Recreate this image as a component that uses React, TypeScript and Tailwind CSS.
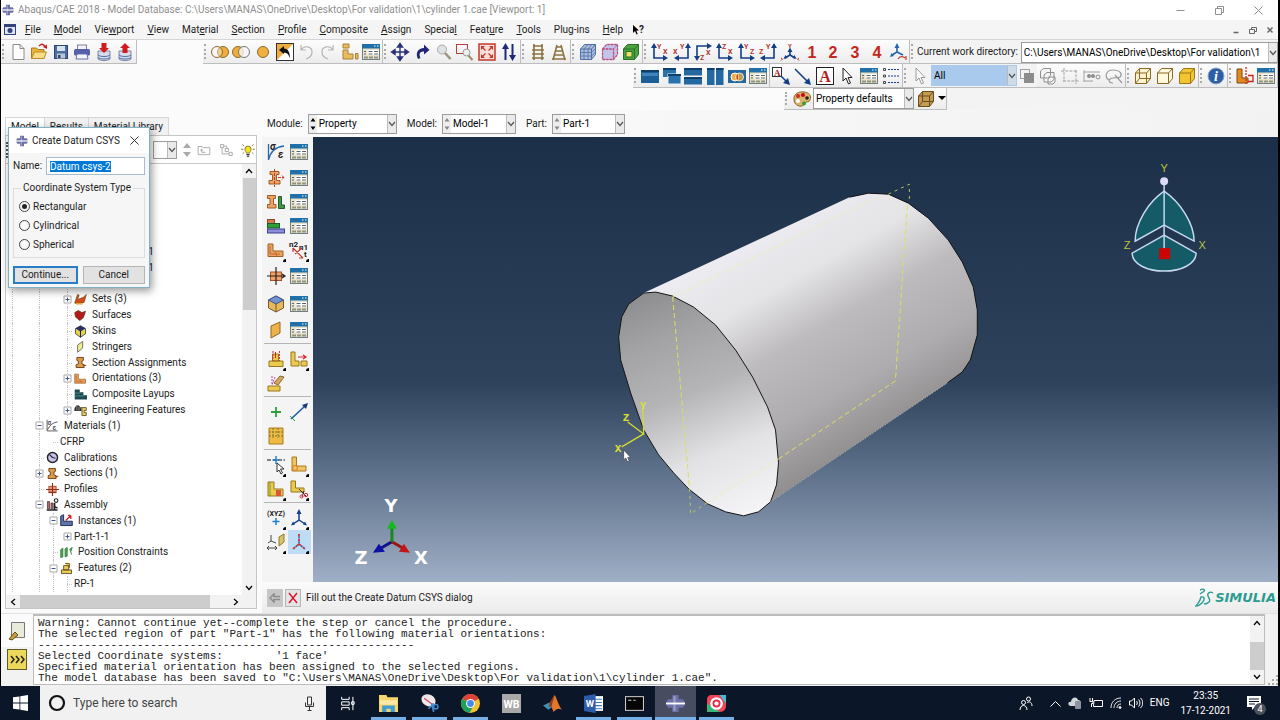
import { useEffect, useRef, useState } from 'react';
import type { ReactNode } from 'react';

function Svg({ children, size = 18 }: { children: ReactNode; size?: number }) {
  return (
    <svg width={size} height={size} viewBox="0 0 18 18" fill="none" className="shrink-0 overflow-visible">
      {children}
    </svg>
  );
}

// Small table window, used for every "manager" button
const manager = (
  <>
    <rect x="0.5" y="1.5" width="17" height="15" fill="#e9e2c8" stroke="#6f7f7f" />
    <rect x="0" y="1" width="18" height="4.5" rx="1" fill="#1f6fa8" />
    <path d="M12 3h1.5M15 3h1.5" stroke="#fff" />
    <rect x="5.5" y="7" width="11" height="5" fill="#fff" />
    <path d="M6.5 8.5h4M12 8.5h4M6.5 11h4M12 11h4M2 8.5h2M2 11h2" stroke="#5b6468" />
    <rect x="2" y="13.5" width="4" height="2" fill="#8d9483" />
    <rect x="7" y="13.5" width="4" height="2" fill="#8d9483" />
    <rect x="12" y="13.5" width="4" height="2" fill="#8d9483" />
  </>
);

const abaqusLogo = (
  <>
    <path d="M6 1h6v4h4l1.5 2v4L16 13h-4v4H6v-4H2L.5 11V7L2 5h4z" fill="#6c70a6" />
    <path d="M7 2h2v14H7z" fill="#9a9dc6" />
    <path d="M0 9h18" stroke="#fff" strokeWidth="1.8" />
  </>
);

const blueArrow = '#123f86';

function axes(flip: boolean, a: string, b: string) {
  return (
    <>
      {flip ? (
        <>
          <path d="M15 4v11H5" stroke={blueArrow} strokeWidth="1.6" />
          <path d="M15 0l-3 5h6zM1 15l5-3v6z" fill={blueArrow} />
        </>
      ) : (
        <>
          <path d="M3 4v11h10" stroke={blueArrow} strokeWidth="1.6" />
          <path d="M3 0L0 5h6zM17 15l-5-3v6z" fill={blueArrow} />
        </>
      )}
      <text x={flip ? 7 : 6} y="6" fontSize="7" fontWeight="700" fill="#b5342c">{a}</text>
      <text x={flip ? 0 : 12} y="11" fontSize="7" fontWeight="700" fill="#b5342c">{b}</text>
    </>
  );
}

const digit = (n: string) => (
  <text x="9" y="15" textAnchor="middle" fontSize="16" fontWeight="700" fill="#c4261d" fontFamily="Liberation Sans">{n}</text>
);

const cube = (fill: string, stroke: string) => (
  <>
    <path d="M1.5 6l4-4.5h11v10l-4 5h-11z" fill={fill} stroke={stroke} />
    <path d="M1.5 6h11v10.500M12.5 6l4-4.5" stroke={stroke} />
  </>
);

const icons: Record<string, ReactNode> = {
  manager,
  newFile: <path d="M4 1.5h7l4 4v11H4zM11 1.5v4h4" fill="#fff" stroke="#8b8b8b" />,
  open: (
    <>
      <path d="M1.5 15.5V5h5L8 6.500h6v9z" fill="#e8b43c" stroke="#a87a1d" />
      <path d="M1.500 15.500L4.500 9h12L14 15.500z" fill="#f9dc83" stroke="#b98b2b" />
      <path d="M9 3c3-3 5-1.500 6 1" stroke="#c8241c" strokeWidth="1.500" />
      <path d="M17 1.500V6l-4-2z" fill="#c8241c" />
    </>
  ),
  save: (
    <>
      <rect x="2.5" y="2.5" width="13" height="13" fill="#4a6ea3" stroke="#2e466f" />
      <rect x="5" y="3" width="8" height="5" fill="#d9e3ef" />
      <rect x="5" y="10.5" width="8" height="5" fill="#b9c4d4" />
      <rect x="6" y="12" width="2.5" height="3" fill="#2e466f" />
    </>
  ),
  print: (
    <>
      <rect x="4.5" y="2" width="9" height="5" fill="#f2f2f7" stroke="#7d80a0" />
      <rect x="1" y="6" width="16" height="6.5" rx="1.5" fill="#5560a8" />
      <path d="M4 11h10l1 5H3z" fill="#f4f4fb" stroke="#6a70a6" />
    </>
  ),
  dbIn: (
    <>
      <path d="M3 8v8c2 2 10 2 12 0V8z" fill="#d6dcea" stroke="#7a88ab" />
      <path d="M3 12c2 2 10 2 12 0M3 14.5c2 2 10 2 12 0" stroke="#5470a5" />
      <path d="M6.5 0h5v5H14l-5 5-5-5h2.5z" fill="#d01b1b" />
    </>
  ),
  dbOut: (
    <>
      <path d="M3 8v8c2 2 10 2 12 0V8z" fill="#d6dcea" stroke="#7a88ab" />
      <path d="M3 12c2 2 10 2 12 0M3 14.5c2 2 10 2 12 0" stroke="#5470a5" />
      <path d="M6.5 10h5V5H14L9 0 4 5h2.5z" fill="#d01b1b" />
    </>
  ),
  union: (
    <>
      <circle cx="12" cy="9" r="5.5" fill="#efae3c" stroke="#8a6a2c" />
      <circle cx="6" cy="9" r="5.5" fill="#fff" fillOpacity="0.4" stroke="#8a6a2c" />
    </>
  ),
  subtract: (
    <>
      <circle cx="6" cy="9" r="5.5" fill="#efae3c" stroke="#8a6a2c" />
      <circle cx="12" cy="9" r="5.5" fill="#f6f6f6" fillOpacity="0.8" stroke="#777" />
    </>
  ),
  circle: <circle cx="9" cy="9" r="5.5" fill="#f0b040" stroke="#8a6a2c" />,
  replace: (
    <>
      <rect x="0.5" y="0.5" width="17" height="17" fill="#fff" stroke="#333" />
      <path d="M1 1h16L1 17z" fill="#efae3c" />
      <path d="M3 7l5-4v2.5c4 0 6 4 6 10-1-4-3-6-6-6V11z" fill="#111" />
    </>
  ),
  undo: <path d="M4 2v5h5M4 7c3-5 11-4 11 2 0 4-3 6-6 7" stroke="#b5b5b5" strokeWidth="1.2" />,
  redo: <path d="M14 2v5H9M14 7C11 2 3 3 3 9c0 4 3 6 6 7" stroke="#b5b5b5" strokeWidth="1.2" />,
  partL: (
    <>
      <path d="M2 1h6v4H2zM2 7h5v4h5v5H2z" fill="#e9bd5c" stroke="#a78138" />
      <path d="M14.500 10.500H17V16h-2.500z" fill="#e9bd5c" stroke="#a78138" />
    </>
  ),
  pan: <path d="M9 2v14M2 9h14M9 .5L6.500 4h5zM9 17.500L6.500 14h5zM.5 9L4 6.500v5zM17.500 9L14 6.500v5z" stroke="#2b3079" strokeWidth="1.4" fill="#2b3079" />,
  rotate: <path d="M5 16C2 10 5 5 11 5V1.500L16.500 7 11 11.500v-3c-4-.5-5.500 2.500-3.500 6.500z" fill="#21267a" />,
  zoomIn: (
    <>
      <path d="M9.500 9.500l6 6.500" stroke="#9c9279" strokeWidth="2.5" />
      <circle cx="7" cy="6.5" r="4.5" fill="#dfe2e4" stroke="#a9a9a9" />
    </>
  ),
  zoomBox: (
    <>
      <rect x="0.5" y="1.5" width="11" height="9" stroke="#b5423a" />
      <path d="M12 12l4.500 5" stroke="#9c8a69" strokeWidth="2" />
      <circle cx="10.5" cy="9.5" r="3.5" fill="#eceff0" stroke="#999" />
    </>
  ),
  fit: (
    <>
      <rect x="1" y="1" width="16" height="16" fill="#f7ded9" stroke="#c5382c" strokeWidth="1.5" />
      <path d="M3 3h4L3 7zM15 3v4l-4-4zM3 15v-4l4 4zM15 15h-4l4-4z" fill="#c5382c" />
      <path d="M4 4l3.500 3.500M14 4l-3.500 3.500M4 14l3.500-3.500M14 14l-3.500-3.500" stroke="#c5382c" strokeWidth="1.3" />
    </>
  ),
  cycle: (
    <>
      <path d="M5.500 4v13M12.500 1v13" stroke="#1f2a78" strokeWidth="2" />
      <path d="M5.500 0L2 6h7zM12.500 18L9 12h7z" fill="#1f2a78" />
    </>
  ),
  perspOff: <path d="M5 1v16M13 1v16M4 3h10M3 7h12M3 11h12M3 15h12" stroke="#8a7440" strokeWidth="1.6" />,
  perspOn: <path d="M7 2L3 17M11 2l4 15M6 4h6M5.500 8h7M4 12h10M2 16h14" stroke="#8a7440" strokeWidth="1.6" />,
  cubeBlue: (
    <>
      {cube('#a9bddd', '#536ea3')}
      <path d="M5 6v10.500M9 6v10.500M1.500 9.500h11l4-4M1.500 13h11l4-4M5 6l4-4.500M9 6l4-4.500" stroke="#536ea3" strokeWidth="0.8" />
    </>
  ),
  cubePink: (
    <>
      {cube('#c3c4ea', '#9a86c4')}
      <path d="M1.500 6l4-4.500h11v10l-4 5h-11zM1.500 6h11v10.500" stroke="#d0486c" strokeDasharray="2 1.5" strokeWidth="1.3" />
    </>
  ),
  cubeGreen: (
    <>
      {cube('#4aa540', '#2c6d28')}
      <rect x="4" y="8.5" width="6" height="5.5" fill="#f0df6a" stroke="#2c6d28" />
    </>
  ),
  xy: axes(false, 'Y', 'X'),
  xyB: axes(true, 'Y', 'X'),
  xz: (
    <>
      <path d="M3 14V3h11" stroke={blueArrow} strokeWidth="1.6" />
      <path d="M3 18l-3-5h6zM18 3l-5-3v6z" fill={blueArrow} />
      <text x="12" y="12" fontSize="7" fontWeight="700" fill="#b5342c">X</text>
      <text x="6" y="17" fontSize="7" fontWeight="700" fill="#b5342c">Z</text>
    </>
  ),
  zx: axes(false, 'Z', 'X'),
  yz: axes(false, 'Y', 'Z'),
  zy: axes(true, 'Y', 'Z'),
  iso: (
    <>
      <path d="M9 7v5l-5 3M9 12l5 3" stroke={blueArrow} strokeWidth="1.6" />
      <path d="M9 4.500L6.500 9h5zM2.500 16l2-4 2 3zM15.500 16l-2-4-2 3z" fill={blueArrow} />
      <text x="7" y="5" fontSize="6" fontWeight="700" fill="#b5342c">Y</text>
      <path d="M0 15l1.500 1L0 17.500M18 15l-1.500 1 1.500 1.500" stroke="#b5342c" />
    </>
  ),
  d1: digit('1'),
  d2: digit('2'),
  d3: digit('3'),
  d4: digit('4'),
  saveView: (
    <>
      <path d="M8 4v5l-5 3M8 9l6 3" stroke="#2862b0" strokeWidth="1.6" />
      <path d="M8 0L5.500 5h5zM1 14l1.500-4 2.500 3z" fill="#2862b0" />
      <path d="M9 16c2-3 5-3 7-1M17 17v-4" stroke="#c9362c" strokeWidth="1.2" />
    </>
  ),
  vpSingle: (
    <>
      <rect x="0" y="3" width="18" height="13" fill="#1c5e97" />
      <rect x="0" y="3" width="18" height="2" fill="#0f3f6c" />
      <rect x="1" y="6" width="16" height="3" fill="#3f85ba" />
    </>
  ),
  vpCascade: (
    <>
      <rect x="0" y="1" width="13" height="9" fill="#2b72ab" />
      <rect x="0" y="1" width="13" height="2" fill="#0f3f6c" />
      <rect x="5" y="7" width="13" height="10" fill="#2b72ab" stroke="#e8eef5" />
      <rect x="5" y="7" width="13" height="2" fill="#0f3f6c" />
    </>
  ),
  vpRows: (
    <>
      <rect x="0" y="1" width="18" height="7.5" fill="#2368a1" />
      <rect x="0" y="1" width="18" height="2" fill="#0f3f6c" />
      <rect x="0" y="10" width="18" height="7.5" fill="#2368a1" />
      <rect x="0" y="10" width="18" height="2" fill="#0f3f6c" />
    </>
  ),
  vpCols: (
    <>
      <rect x="1" y="1" width="7.5" height="17" fill="#2368a1" />
      <rect x="1" y="1" width="7.5" height="2" fill="#0f3f6c" />
      <rect x="10" y="1" width="7.5" height="17" fill="#2368a1" />
      <rect x="10" y="1" width="7.5" height="2" fill="#0f3f6c" />
    </>
  ),
  vpLink: (
    <>
      <rect x="0" y="3" width="18" height="13" fill="#2368a1" />
      <circle cx="7" cy="10" r="4" fill="#f0b040" stroke="#fff" />
      <circle cx="11.5" cy="10" r="4" fill="#f0b040" fillOpacity="0.7" stroke="#fbe7bb" />
      <path d="M9.300 7.500v5" stroke="#c33" strokeWidth="1.3" />
    </>
  ),
  textArrow: (
    <>
      <rect x="0.5" y="0.5" width="9" height="9" fill="#fff" stroke="#333" />
      <text x="2" y="8.5" fontSize="9" fontWeight="700" fill="#b3201a" fontFamily="Liberation Serif">A</text>
      <path d="M9 9l6 6" stroke={blueArrow} strokeWidth="1.5" />
      <path d="M18 18l-7-2 5-5z" fill={blueArrow} />
    </>
  ),
  arrow: (
    <>
      <path d="M1 2l12 12" stroke={blueArrow} strokeWidth="1.6" />
      <path d="M17 18l-7-2 5-5z" fill={blueArrow} />
    </>
  ),
  textA: (
    <>
      <rect x="0.5" y="0.5" width="17" height="17" fill="#fff" stroke="#222" />
      <text x="9" y="14.5" textAnchor="middle" fontSize="16" fontWeight="700" fill="#b3201a" fontFamily="Liberation Serif">A</text>
    </>
  ),
  pointer: <path d="M5 1v13l3-3 2.500 6 2-1L10 10.500h4z" fill="#fff" stroke="#222" />,
  pointerDim: <path d="M5 1v13l3-3 2.500 6 2-1L10 10.500h4z" fill="#fff" stroke="#999" />,
  list: (
    <>
      <path d="M1.500 1.500h2v2h-2zM1.500 8h2v2h-2zM1.500 14.500h2v2h-2z" stroke="#444" />
      <path d="M6 2.500h12M6 9h12M6 15.500h12" stroke={blueArrow} strokeDasharray="2 1" />
    </>
  ),
  selBox: (
    <>
      <rect x="2.5" y="2.5" width="9" height="9" stroke="#a0a0a0" />
      <rect x="6" y="6" width="10" height="10" fill="#8c8c8c" />
    </>
  ),
  selCubes: <path d="M1.500 4l3-2.500h7v7l-3 2.500h-7zM5 8l3-2.500h7v7L12 15H5zM9 12l2-2h5v5l-2 2H9z" stroke="#8f8f8f" fill="#f4f4f4" />,
  selDrag: <path d="M3 1v14M15 3v14M0 4h16M2 14h16" stroke="#a0a0a0" strokeDasharray="3 1.2" />,
  selFilter: (
    <>
      <path d="M1 3v12M1 5h16M1 14h9" stroke="#a0a0a0" />
      <circle cx="6" cy="9" r="2" fill="#8c8c8c" />
      <circle cx="10" cy="9" r="2" fill="#8c8c8c" />
      <circle cx="15" cy="10" r="2" stroke="#8c8c8c" />
    </>
  ),
  selLasso: <path d="M4 13C-1 10 1 3 8 3s10 4 7 7c-3 2-8-1-11 3 0 2 2 3 4 3M10 8l7 8" stroke="#9a9a9a" strokeWidth="1.2" />,
  wire: (
    <>
      {cube('#fff4cf', '#8a6a20')}
      <path d="M5.500 1.500v10h11M5.500 11.500l-4 5" stroke="#8a6a20" />
    </>
  ),
  hidden: cube('#fff9df', '#8a6a20'),
  shaded: cube('#f2c531', '#9a7818'),
  info: (
    <>
      <circle cx="9" cy="9" r="8" fill="#2c5ea8" stroke="#8fa8cc" />
      <text x="9" y="14" textAnchor="middle" fontSize="14" fontStyle="italic" fontWeight="700" fill="#fff" fontFamily="Liberation Serif">i</text>
    </>
  ),
  cutL: (
    <>
      <path d="M1 2h5v9h6v5H1z" fill="#e08a1e" stroke="#7d4a10" />
      <path d="M10 0v18" stroke="#d22" strokeDasharray="2 1" strokeWidth="1.3" />
      <path d="M12 8.500h5v6h-5" stroke="#c22" strokeWidth="1.3" />
    </>
  ),
  palette: (
    <>
      <path d="M1 10C0 4 6 1 11 2c5 0 8 4 6 8-1 3-4 1-5 3s-3 4-6 3-5-3-5-6z" fill="#d9b36a" stroke="#8c6a33" />
      <circle cx="5" cy="6" r="2" fill="#d22a22" />
      <circle cx="10" cy="5" r="2" fill="#c02" />
      <circle cx="14" cy="8" r="1.8" fill="#222" />
      <circle cx="5" cy="11" r="2" fill="#fff" />
      <circle cx="11" cy="13.5" r="2" fill="#3a9c3a" />
    </>
  ),
  cubeTan: (
    <>
      {cube('#c59a53', '#6b4d1c')}
      <path d="M5.500 1.500v10h11M5.500 11.500l-4 5" stroke="#6b4d1c" />
    </>
  ),
  material: (
    <>
      <path d="M1.500 1v16M1.500 17C3 10 8 4 17 3" stroke="#2d69a8" strokeWidth="1.3" />
      <text x="3" y="7" fontSize="10" fontWeight="700" fontStyle="italic" fill="#222">σ</text>
      <text x="11" y="15" fontSize="10" fontWeight="700" fontStyle="italic" fill="#222">ε</text>
    </>
  ),
  section: (
    <>
      <path d="M3 2.500h9v3H9.500v6H13V15H2v-3.500h3.500v-6H3z" fill="#eda465" stroke="#9c5a26" />
      <path d="M7.500 0v18M11 8.500h6M15 6.500l2 2-2 2" stroke="#c03a22" strokeDasharray="3 1" />
    </>
  ),
  assignSection: (
    <>
      <path d="M.5 2.500h8v3h-2v6H9V15H.5v-3.500H3v-6H.5z" fill="#eda465" stroke="#9c5a26" />
      <path d="M11.500 3.500h3V12h3v3.500h-6z" fill="#3f9648" stroke="#235a2a" />
    </>
  ),
  layup: (
    <>
      <rect x="0.5" y="2.5" width="7" height="4" fill="#d77b4d" stroke="#8a4d2c" />
      <rect x="0.5" y="6.5" width="12" height="4.5" fill="#2f9d3c" stroke="#1c5e24" />
      <rect x="0.5" y="12" width="17" height="4" fill="#8a8fdc" stroke="#3b4090" />
    </>
  ),
  orient: (
    <>
      <path d="M1 3h5v7h10v5.500H1z" fill="#e9a35b" stroke="#9a622a" />
      <path d="M3 5v8h10M8 11l2 4" stroke="#c2562a" strokeWidth="0.8" />
    </>
  ),
  normals: (
    <>
      <text x="-1" y="6" fontSize="8" fontWeight="700" fill="#222">n2</text>
      <text x="9" y="9" fontSize="8" fontWeight="700" fill="#222">n1</text>
      <path d="M3 7l10 10M5 13l7-6M3 7v4M13 17H9" stroke="#c43a30" strokeWidth="1.2" />
      <text x="14" y="16" fontSize="8" fontWeight="700" fill="#222">t</text>
    </>
  ),
  profile: (
    <>
      <rect x="3.5" y="5" width="11" height="8.5" fill="#eea26c" stroke="#a5522c" />
      <path d="M9 0v18M0 9h18M15 7l3 2-3 2" stroke="#2a2018" strokeWidth="1.2" />
    </>
  ),
  skin: (
    <>
      <path d="M9 1l7.500 4v8L9 17l-7.500-4V5z" fill="#e9b85a" stroke="#6f5a2c" />
      <path d="M9 1l7.500 4L9 9 1.500 5z" fill="#7492d2" stroke="#3c558f" />
      <path d="M9 9v8" stroke="#6f5a2c" />
    </>
  ),
  stringer: <path d="M4 5l9-4v11l-9 5z" fill="#eeb24a" stroke="#8f6a26" />,
  extrude: (
    <>
      <path d="M2 11h14v5.500H2zM5.500 4h6v7h-6z" fill="#ecca4d" stroke="#96761f" />
      <path d="M6 1v10M12.500 1v10" stroke="#c33" strokeDasharray="2 1" />
      <path d="M8.500 2v6" stroke="#b33" />
    </>
  ),
  extend: (
    <>
      <path d="M1 2h4v9h4v5H1zM11 11h6v5h-6z" fill="#ecca4d" stroke="#96761f" />
      <path d="M8 7h7M13 5l3 2-3 2" stroke="#d22" strokeWidth="1.2" />
    </>
  ),
  edit: (
    <>
      <path d="M1 12h12v5H1z" fill="#ecca4d" stroke="#96761f" />
      <path d="M7 9l6-7 4 1-6 8z" fill="#d5a85f" stroke="#8a6730" />
      <path d="M5 2v9M8 3l-3 8" stroke="#b349a8" strokeDasharray="2 1" />
    </>
  ),
  plus: <path d="M9 4v10M4 9h10" stroke="#2fa03a" strokeWidth="1.8" />,
  datumAxis: (
    <>
      <path d="M1 16L15 3" stroke="#1d5ea0" strokeWidth="1.6" />
      <path d="M18 0l-2 6-4-4z" fill="#163a78" />
      <path d="M0 13l5 5" stroke="#2fa03a" />
    </>
  ),
  grid: (
    <>
      <path d="M2 1h14v16H2z" fill="#efb944" stroke="#a87c20" />
      <path d="M2 5h14M2 9h14M6 1v10M11 1v10" stroke="#7d7a2a" strokeDasharray="2 1" />
    </>
  ),
  partition: (
    <>
      <path d="M0 4h18" stroke="#111" strokeDasharray="4 1.5" />
      <path d="M9 0v8M6 4h6" stroke="#1d7fd0" strokeWidth="1.4" />
      <path d="M10 7v9l2-2 2 4 1.500-1-2-4H17z" fill="#fff" stroke="#333" />
    </>
  ),
  bracket: (
    <>
      <path d="M2 1h4.500v9H16v5H2z" fill="#f0c464" stroke="#a87c20" />
      <circle cx="5" cy="12" r="2.5" stroke="#e07a20" />
    </>
  ),
  cells: (
    <>
      <path d="M1 2h6v7h9v7H1z" fill="#ecca4d" stroke="#96761f" />
      <rect x="9" y="10" width="5" height="6" fill="#d8563a" />
      <path d="M3 2v14" stroke="#7a9a30" />
    </>
  ),
  cutPart: (
    <>
      <path d="M1 1h4.500v7H14v4H1z" fill="#ecca4d" stroke="#96761f" />
      <path d="M9 9l7 7M12 17l2-6" stroke="#333" />
      <circle cx="16" cy="15" r="1.7" stroke="#d23" />
      <circle cx="11.5" cy="16.5" r="1.5" stroke="#d23" />
    </>
  ),
  xyz: (
    <>
      <text x="9" y="7" textAnchor="middle" fontSize="7" fontWeight="700" fill="#222">(XYZ)</text>
      <path d="M9 9v7M5.500 12.500h7" stroke="#1d7fd0" strokeWidth="1.5" />
    </>
  ),
  csys: (
    <>
      <path d="M9 4v7l-6 4M9 11l6 4" stroke={blueArrow} strokeWidth="1.5" />
      <path d="M9 0L6.500 5h5zM1 16.500l2-4 2 3zM17 16.500l-2-4-2 3z" fill={blueArrow} />
    </>
  ),
  planeOffset: (
    <>
      <path d="M4 2v6L1 10M4 8l5 2" stroke="#444" />
      <path d="M12 4l5-3v8l-5 4z" fill="#d6c46a" stroke="#8a7a2a" />
      <path d="M0 15h10M2 13l-2 2 2 2M8 13l2 2-2 2" stroke="#444" />
    </>
  ),
  csysDashed: (
    <>
      <path d="M9 1v10l-6 5M9 11l6 5" stroke="#c33" strokeDasharray="2.5 2.5" strokeWidth="1.8" />
      <path d="M9 1v10l-6 5M9 11l6 5" stroke="#1d5ea0" strokeDasharray="2 3" strokeDashoffset="2.5" strokeWidth="1.4" />
    </>
  ),
  // tree icons
  sets: (
    <>
      <path d="M1 14L5 2l2 1-2 6 8-3 4-4-3 11-9 2z" fill="#d84a1c" stroke="#6e4b12" />
      <path d="M3 15h9" stroke="#e3b13a" strokeWidth="2" />
    </>
  ),
  surfaces: <path d="M1 5l5-3 5 3 5-2-3 9-5 4-6-5z" fill="#b51a1a" stroke="#5e3a1a" />,
  skins: (
    <>
      <path d="M9 1l7 4v7l-7 5-7-5V5z" fill="#e6d44e" stroke="#222" />
      <path d="M9 1l7 4-7 4-7-4z" fill="#2a2f6a" />
      <path d="M9 8v9" stroke="#222" strokeWidth="1.5" />
    </>
  ),
  stringers: <path d="M5 7l7-5v9l-7 6z" fill="#f0ec90" stroke="#444" />,
  beam: <path d="M4 2h9v4l-2 1v4l3 1v4H3v-4l3-1V7L4 6zM13 13h4" fill="#d99a4c" stroke="#6e3d12" strokeWidth="1.3" />,
  composite: (
    <>
      <path d="M1 2h7v4h5v4h5v6H1z" fill="#1e4a52" />
      <path d="M1 7h8M1 11h13" stroke="#4fa39c" />
    </>
  ),
  features: (
    <>
      <path d="M1 9c0-9 8-9 9 0z" fill="#333" stroke="#111" />
      <path d="M4 3v6M7 3v6" stroke="#aaa" />
      <path d="M10 5h7M11 5v11h6v-4h-3V9h3V5" fill="#e8d070" stroke="#5a4a1a" strokeWidth="1.2" />
    </>
  ),
  treeMaterial: (
    <>
      <path d="M1.500 1v15.500H16M2 15C5 9 9 5 16 4" stroke="#555" strokeWidth="1.3" />
      <text x="2" y="8" fontSize="9" fontWeight="700" fill="#555">σ</text>
      <text x="9" y="15" fontSize="9" fontWeight="700" fill="#555">ε</text>
    </>
  ),
  calib: (
    <>
      <circle cx="9" cy="9" r="7" fill="#c9c4ee" stroke="#222" strokeWidth="2" />
      <path d="M9 9L5 5M9 9l4 1" stroke="#222" strokeWidth="1.5" />
    </>
  ),
  profiles: (
    <>
      <rect x="4" y="4.5" width="10" height="9" fill="#f09a76" stroke="#8f2f1c" />
      <path d="M9 0v18M0 9h18M4 13h10" stroke="#8f2f1c" strokeWidth="1.6" />
    </>
  ),
  assembly: (
    <>
      <path d="M2 5h3v10H2zM7 7h3v8H7z" fill="#b66" stroke="#333" />
      <path d="M12 16V7M1 16.500h15M12 12l4 2" stroke="#222" strokeWidth="2" />
      <circle cx="14" cy="3.5" r="2.5" stroke="#222" strokeWidth="1.5" />
    </>
  ),
  instances: (
    <>
      <path d="M1 3l4-2v9h12v6H1z" fill="#5d74a8" stroke="#1c2a50" strokeWidth="1.3" />
      <path d="M8 9l7-7M15 2v5M15 2h-4" stroke="#d22" strokeWidth="1.8" />
    </>
  ),
  constraints: <path d="M1 5l3-2v12l-3 1zM7 4l3-2v12l-3 1zM13 5l4-3-2 6 1 4" fill="#4fae54" stroke="#226b2c" />,
  treeFeatures: <path d="M2 11h14v5H2zM5 5h7v6H5zM7 2h6v6" fill="#eacb5a" stroke="#5c4712" strokeWidth="1.2" />,
  folderUp: <path d="M1.500 4.500h5L8 6h8.500v9h-15zM6 8v4h5M4.500 10L6 8l2 2" stroke="#999" />,
  treeLinks: <path d="M2 2h4v4H2zM8 7h4v4H8zM13 12h4v4h-4zM4 6v8h9M6 4h4v3" stroke="#999" />,
  bulb: (
    <>
      <path d="M5 8a4 4 0 1 1 8 0c0 2-2 3-2 5H7c0-2-2-3-2-5z" fill="#f5e61c" stroke="#6a6418" />
      <path d="M7 15h4M7.500 17h3" stroke="#333" strokeWidth="1.5" />
      <path d="M2 2l2 2M16 2l-2 2M0 8h3M18 8h-3M2 14l2-2M16 14l-2-2" stroke="#6a6418" />
    </>
  ),
};

function ToolButton({ name, corner, active }: { name: string; corner?: boolean; active?: boolean }) {
  return (
    <button
      aria-label={name}
      className={`relative flex flex-1 items-center justify-center ${active ? 'bg-[#bfdcf6]' : ''}`}
    >
      <Svg>{icons[name]}</Svg>
      {corner && <span className="absolute right-0.5 bottom-0 size-[3px] rounded-tl-full bg-black" />}
    </button>
  );
}

function Handle() {
  return <span className="my-1 mr-[3px] ml-px w-0.5 border-l-2 border-dotted border-[#aaa]" />;
}

function Toolbar({ names, className = '', handle = true, children }: {
  names: string[];
  className?: string;
  handle?: boolean;
  children?: ReactNode;
}) {
  return (
    <div className={`flex shrink-0 items-stretch border-r border-b border-[#bdbdbd] bg-gradient-to-b from-[#fdfdfd] to-[#ececec] ${className}`}>
      {handle && <Handle />}
      {names.map((name) => (
        <ToolButton key={name} name={name} />
      ))}
      {children}
    </div>
  );
}

function Chevron({ className = 'text-[#555]' }: { className?: string }) {
  return (
    <svg width="8" height="6" viewBox="0 0 8 6" fill="none" className={className}>
      <path d="M1 1l3 3.500L7 1" stroke="currentColor" strokeWidth="1.2" />
    </svg>
  );
}

function Combo({ id, value, className = '', spin, fieldClass = 'bg-white' }: {
  id: string;
  value: string;
  className?: string;
  spin?: 'dark' | 'light';
  fieldClass?: string;
}) {
  return (
    <div className={`flex items-stretch border border-[#9c9c9c] ${fieldClass} ${className}`}>
      {spin && (
        <span className={`flex w-2 items-center justify-center bg-[#eee] ${spin === 'dark' ? 'text-black' : 'text-[#888]'}`}>
          <svg width="6" height="12" viewBox="0 0 6 12" fill="currentColor">
            <path d="M3 0l2.500 3.500h-5zM3 12l2.500-3.500h-5z" />
          </svg>
        </span>
      )}
      <div className="relative flex min-w-0 flex-1">
        <select
          id={id}
          aria-label={value}
          className="w-full appearance-none bg-transparent pr-2.5 pl-0.5 text-black outline-none"
        >
          <option>{value}</option>
        </select>
        <span className="pointer-events-none absolute inset-y-0 right-0 flex w-[9px] items-center justify-center border-l border-[#bbb] bg-[#e1e1e1]/70">
          <Chevron />
        </span>
      </div>
    </div>
  );
}

const menus = [
  ['', 'F', 'ile'], ['', 'M', 'odel'], ['Vie', 'w', 'port'], ['', 'V', 'iew'], ['Mat', 'e', 'rial'],
  ['', 'S', 'ection'], ['', 'P', 'rofile'], ['', 'C', 'omposite'], ['', 'A', 'ssign'], ['Specia', 'l', ''],
  ['Feat', 'u', 're'], ['', 'T', 'ools'], ['Plug-ins', '', ''], ['', 'H', 'elp'],
];

function TitleBar() {
  return (
    <header className="flex h-5 shrink-0 items-center bg-white pl-px text-[#8f8f8f]">
      <Svg size={12}>{abaqusLogo}</Svg>
      <h1 className="ml-1 flex-1 truncate">
        Abaqus/CAE 2018 - Model Database: C:\Users\MANAS\OneDrive\Desktop\For validation\1\cylinder 1.cae [Viewport: 1]
      </h1>
      <div className="flex">
        <button aria-label="Minimize" className="flex w-[39px] justify-center">
          <svg width="9" height="9" stroke="currentColor" fill="none"><path d="M.5 4.500h8" /></svg>
        </button>
        <button aria-label="Restore" className="flex w-[39px] justify-center">
          <svg width="9" height="9" stroke="currentColor" fill="none"><path d="M.5 2.500h6v6h-6zM2.500 2V.5h6v6H7" /></svg>
        </button>
        <button aria-label="Close" className="flex w-[39px] justify-center">
          <svg width="9" height="9" stroke="currentColor" fill="none"><path d="M.5.5l8 8M8.500.5l-8 8" /></svg>
        </button>
      </div>
    </header>
  );
}

function MenuBar() {
  return (
    <nav className="flex h-5 shrink-0 items-center border-b border-[#d5d5d5] bg-[#f5f5f5] pl-[3px]">
      <svg width="12" height="11" viewBox="0 0 12 11">
        <rect width="12" height="11" fill="#31427f" />
        <rect x="1" y="3" width="10" height="7" fill="#dfe4f2" />
        <circle cx="6" cy="6.5" r="2.5" fill="#31427f" />
      </svg>
      <div className="ml-[9px] flex gap-[13px]">
        {menus.map(([pre, key, post]) => (
          <button key={pre + key + post}>
            {pre}
            <span className="underline">{key}</span>
            {post}
          </button>
        ))}
      </div>
      <button aria-label="Context help" className="ml-2.5 flex items-center font-bold">
        <svg width="6" height="10" viewBox="0 0 6 10"><path d="M0 0v8l2-2 1.500 3.500 1.200-.6-1.400-3.400H6z" /></svg>
        ?
      </button>
      <div className="ml-auto flex gap-[9px] pr-1 text-[#666]">
        <svg width="8" height="8" stroke="currentColor" strokeWidth="1.5"><path d="M1.500 6.500h5" /></svg>
        <svg width="8" height="8" stroke="currentColor" fill="none"><path d="M.5 3.500h5v4h-5zM2.500 3V1.500h5v4H6" /></svg>
        <svg width="8" height="8" stroke="currentColor" strokeWidth="1.5"><path d="M1.500 1.500l5 5M6.500 1.500l-5 5" /></svg>
      </div>
    </nav>
  );
}

function Toolbars() {
  return (
    <div className="flex shrink-0 flex-col bg-[#fbfbfc]">
      <div className="flex h-6">
        <Toolbar className="mr-[66px] w-[136px]" names={['newFile', 'open', 'save', 'print', 'dbIn', 'dbOut']} />
        <Toolbar className="w-[180px]" names={['union', 'subtract', 'circle', 'replace', 'undo', 'redo', 'partL', 'manager']} />
        <Toolbar className="w-[138px]" names={['pan', 'rotate', 'zoomIn', 'zoomBox', 'fit', 'cycle']} />
        <Toolbar className="w-[50px]" names={['perspOff', 'perspOn']} />
        <Toolbar className="w-[72px]" names={['cubeBlue', 'cubePink', 'cubeGreen']} />
        <Toolbar
          className="w-[267px]"
          names={['xy', 'xyB', 'xz', 'zx', 'yz', 'zy', 'iso', 'd1', 'd2', 'd3', 'd4', 'saveView']}
        />
        <div className="flex min-w-0 flex-1 items-stretch border-b border-[#bdbdbd] bg-[#f3f3f3]">
          <Handle />
          <label htmlFor="workdir" className="mr-[3px] ml-px self-center whitespace-nowrap">Current work directory:</label>
          <Combo id="workdir" value="C:\Users\MANAS\OneDrive\Desktop\For validation\1" className="mt-0.5 flex-1" />
        </div>
      </div>

      <div className="flex h-6 justify-end">
        <Toolbar className="w-[137px]" names={['vpSingle', 'vpCascade', 'vpRows', 'vpCols', 'vpLink', 'manager']} />
        <Toolbar className="w-[133px]" handle={false} names={['textArrow', 'arrow', 'textA', 'pointer', 'manager', 'list']} />
        <div className="flex items-stretch border-b border-[#bdbdbd] bg-[#f3f3f3]">
          <Handle />
          <div className="flex w-[22px]"><ToolButton name="pointerDim" /></div>
          <Combo id="selection" value="All" fieldClass="bg-[#a9caec]" className="my-px w-[86px] border-[#a9caec]" />
          <div className="flex w-5"><ToolButton name="selBox" /></div>
        </div>
        <Toolbar className="w-[89px]" handle={false} names={['selCubes', 'selDrag', 'selFilter', 'selLasso']} />
        <Toolbar className="w-[73px]" names={['wire', 'hidden', 'shaded']} />
        <Toolbar className="w-[29px]" names={['info']} />
        <Toolbar className="w-[50px]" names={['cutL', 'manager']} />
      </div>

      <div className="flex h-[22px] justify-end">
        <Toolbar className="w-[163px]" names={[]}>
          <div className="flex w-[23px]"><ToolButton name="palette" /></div>
          <Combo id="color" value="Property defaults" className="w-[101px]" />
          <div className="flex w-6"><ToolButton name="cubeTan" /></div>
          <svg width="8" height="18" viewBox="0 0 8 18"><path d="M0 8h8l-4 4z" /></svg>
        </Toolbar>
        <div className="w-[331px] bg-[#f3f3f3]" />
      </div>
    </div>
  );
}

type Row = {
  label: string;
  depth: number;
  lines: number[];
  icon?: string;
  box?: '+' | '-';
};

const treeRows: Row[] = [
  { label: '', depth: 0, lines: [0], box: '-' },
  { label: '', depth: 0, lines: [0], box: '-' },
  { label: '', depth: 1, lines: [0], box: '-' },
  { label: '', depth: 2, lines: [0], box: '-' },
  { label: '', depth: 3, lines: [0, 2], box: '-' },
  { label: 'Shell extrude-1', depth: 5, lines: [0, 2, 4], box: '+' },
  { label: 'Shell extrude-1', depth: 5, lines: [0, 2, 4], box: '+' },
  { label: '', depth: 5, lines: [0, 2, 4] },
  { label: 'Sets (3)', depth: 4, lines: [0, 2, 4], icon: 'sets', box: '+' },
  { label: 'Surfaces', depth: 4, lines: [0, 2, 4], icon: 'surfaces' },
  { label: 'Skins', depth: 4, lines: [0, 2, 4], icon: 'skins' },
  { label: 'Stringers', depth: 4, lines: [0, 2, 4], icon: 'stringers' },
  { label: 'Section Assignments', depth: 4, lines: [0, 2, 4], icon: 'beam' },
  { label: 'Orientations (3)', depth: 4, lines: [0, 2, 4], icon: 'orient', box: '+' },
  { label: 'Composite Layups', depth: 4, lines: [0, 2, 4], icon: 'composite' },
  { label: 'Engineering Features', depth: 4, lines: [0, 2, 4], icon: 'features', box: '+' },
  { label: 'Materials (1)', depth: 2, lines: [0, 2], icon: 'treeMaterial', box: '-' },
  { label: 'CFRP', depth: 3, lines: [0, 2] },
  { label: 'Calibrations', depth: 2, lines: [0, 2], icon: 'calib' },
  { label: 'Sections (1)', depth: 2, lines: [0, 2], icon: 'beam', box: '+' },
  { label: 'Profiles', depth: 2, lines: [0, 2], icon: 'profiles' },
  { label: 'Assembly', depth: 2, lines: [0, 2], icon: 'assembly', box: '-' },
  { label: 'Instances (1)', depth: 3, lines: [0, 2, 3], icon: 'instances', box: '-' },
  { label: 'Part-1-1', depth: 4, lines: [0, 2, 3], box: '+' },
  { label: 'Position Constraints', depth: 3, lines: [0, 2, 3], icon: 'constraints' },
  { label: 'Features (2)', depth: 3, lines: [0, 2, 3], icon: 'treeFeatures', box: '-' },
  { label: 'RP-1', depth: 4, lines: [0, 2, 3, 4] },
];

function TreeRow({ row }: { row: Row }) {
  return (
    <li className="flex min-h-0 flex-1 items-stretch">
      {Array.from({ length: row.depth + 1 }, (_, i) => (
        <span key={i} className={`relative shrink-0 ${i === 0 ? 'w-3' : 'w-[14px]'}`}>
          {row.lines.includes(i) && <span className="absolute inset-y-0 left-1/2 border-l border-dotted border-[#c4c4c4]" />}
          {i === row.depth && !row.box && (
            <span className="absolute top-1/2 right-0.5 left-1/2 border-t border-dotted border-[#c4c4c4]" />
          )}
          {i === row.depth && row.box && (
            <svg width="9" height="9" viewBox="0 0 9 9" className="absolute inset-0 m-auto">
              <path d="M1 1h7v7H1z" fill="#fff" stroke="#a8a8a8" />
              <path d={row.box === '+' ? 'M2.500 4.500h4M4.500 2.500v4' : 'M2.500 4.500h4'} stroke="#44578c" />
            </svg>
          )}
        </span>
      ))}
      <span className="flex items-center whitespace-nowrap">
        {row.icon && (
          <span className="mr-[5px]">
            <Svg size={13}>{icons[row.icon]}</Svg>
          </span>
        )}
        {row.label}
      </span>
    </li>
  );
}

function ModelPanel() {
  const tabs = ['Model', 'Results', 'Material Library'];
  return (
    <aside className="flex w-[261px] shrink-0 flex-col pt-[7px] pr-[5px] pb-1 pl-1">
      <div className="flex h-[18px] shrink-0" role="tablist">
        {tabs.map((tab, i) => (
          <button
            key={tab}
            role="tab"
            aria-selected={i === 0}
            className={`border-t border-r border-[#d6d6d6] px-[5px] ${i === 0 ? 'border-l bg-white' : 'bg-[#f1f1f1]'}`}
          >
            {tab}
          </button>
        ))}
      </div>
      <div className="flex min-h-0 flex-1 flex-col border border-[#c6c6c6] bg-white">
        <div className="flex h-7 shrink-0 items-center border-b border-[#c6c6c6]">
          <span className="h-4 flex-1 border-l-2 border-dotted border-[#555]" />
          <Combo id="treefilter" value=" " className="h-[18px] w-6" />
          <svg width="8" height="14" viewBox="0 0 8 14" fill="#aaa" className="mx-1.5">
            <path d="M4 0l4 5H0zM4 14l4-5H0z" />
          </svg>
          <button aria-label="Up" className="mr-2"><Svg size={14}>{icons.folderUp}</Svg></button>
          <button aria-label="Links" className="mr-2"><Svg size={14}>{icons.treeLinks}</Svg></button>
          <button aria-label="Tips" className="mr-px"><Svg size={14}>{icons.bulb}</Svg></button>
        </div>
        <div className="flex min-h-0 flex-1">
          <ul className="flex min-h-0 min-w-0 flex-1 flex-col overflow-hidden pt-px pb-[3px]">
            {treeRows.map((row, i) => (
              <TreeRow key={i} row={row} />
            ))}
          </ul>
          <div className="flex w-[14px] flex-col items-center bg-[#f2f2f2] py-1">
            <Chevron className="mb-1 rotate-180 text-black" />
            <div className="h-[132px] w-[13px] bg-[#cdcdcd]" />
            <Chevron className="mt-auto text-black" />
          </div>
        </div>
        <div className="flex h-[13px] shrink-0 items-stretch bg-[#f2f2f2]">
          <Chevron className="mx-[3px] self-center rotate-90 text-black" />
          <div className="mr-[22px] flex-1 bg-[#cdcdcd]" />
          <Chevron className="mr-4 self-center -rotate-90 text-black" />
        </div>
      </div>
    </aside>
  );
}

const toolGroups = [
  [
    ['material', 'manager', 'h-7'],
    ['section', 'manager', 'h-6'],
    ['assignSection', 'manager', 'h-6'],
    ['layup', 'manager', 'h-6'],
    ['orient*', 'normals*', 'h-6'],
    ['profile', 'manager', 'h-7'],
    ['skin', 'manager', 'h-7'],
    ['stringer', 'manager', 'h-6'],
  ],
  [['extrude*', 'extend*', 'h-6'], ['edit', '', 'h-6']],
  [['plus', 'datumAxis', 'h-6'], ['grid', '', 'h-6']],
  [['partition*', 'bracket*', 'h-6'], ['cells*', 'cutPart*', 'h-6']],
  [['xyz*', 'csys*', 'h-6'], ['planeOffset*', 'csysDashed*', 'h-6']],
];

function Toolbox() {
  return (
    <div className="flex w-[51px] shrink-0 flex-col bg-[#f4f4f4] px-0.5 pt-px">
      {toolGroups.map((group, g) => (
        <div key={g} className={g > 0 ? 'mt-px border-t border-[#b5b5b5] pt-[3px]' : ''}>
          {group.map(([a, b, h]) => (
            <div key={a} className={`flex ${h}`}>
              {[a, b].map((name, i) =>
                name ? (
                  <ToolButton
                    key={i}
                    name={name.replace('*', '')}
                    corner={name.endsWith('*')}
                    active={name === 'csysDashed*'}
                  />
                ) : (
                  <span key={i} className="flex-1" />
                ),
              )}
            </div>
          ))}
        </div>
      ))}
    </div>
  );
}

function Viewport() {
  return (
    <div className="relative min-w-0 flex-1 bg-gradient-to-b from-[#1b2f48] from-0% via-[#2e425c] via-55% to-[#9fafc6]">
      <svg viewBox="312 137 966 445" className="absolute inset-0 size-full" fill="none">
        <defs>
          <linearGradient id="outer" gradientUnits="userSpaceOnUse" x1="740" y1="240" x2="860" y2="450">
            <stop offset="0" stopColor="#ececf2" />
            <stop offset="0.25" stopColor="#e4e3e5" />
            <stop offset="0.48" stopColor="#bdbbbd" />
            <stop offset="0.75" stopColor="#aeacae" />
            <stop offset="1" stopColor="#8f8d8e" />
          </linearGradient>
          <linearGradient id="inner" gradientUnits="userSpaceOnUse" x1="650" y1="292" x2="740" y2="516">
            <stop offset="0" stopColor="#8e8d90" />
            <stop offset="0.2" stopColor="#a3a2a4" />
            <stop offset="0.45" stopColor="#b5b4b6" />
            <stop offset="0.72" stopColor="#e2e1e3" />
            <stop offset="1" stopColor="#f4f3f5" />
          </linearGradient>
        </defs>
        <path d="M643 293L849 197 868 193 888 194 908 203 928 218 948 240 962 262 973 287 977 310 977 335 970 360 962 372 947 383 770 502 690 480 650 320z" fill="url(#outer)" />
        <path d="M849 197L868 193 888 194 908 203 928 218 948 240 962 262 973 287 977 310 977 335 970 360 962 372 947 383" stroke="#111" />
        <path
          d="M643 293L628 304 621 317 618 337 620 360 630 393 643 430 658 455 673 473 688 489 707 504 725 512 743 516 758 512 770 502 776 485 778 463 775 430 767 407 752 377 735 350 715 325 693 307 672 296 655 292z"
          fill="url(#inner)"
          stroke="#161616"
        />
        <path d="M770 502L947 383" stroke="#c9cbb0" strokeDasharray="1 2" strokeWidth="0.8" />
        <path d="M672 297L689 489M778 459L895 381 907 205" stroke="#dede5c" strokeDasharray="5 3" />
        <path d="M689 489l1 25 16-11M888 194l21-10v18" stroke="#b6c95a" strokeDasharray="3 4" />
        <path d="M706 503L778 459M672 297L880 196" stroke="#eeecb4" strokeDasharray="5 3" strokeWidth="0.9" />

        {/* datum csys */}
        <path d="M642 408l1 26-16-12M643 434l-22 13" stroke="#d4dc30" strokeWidth="1.3" />
        <g fill="#dbe22e" fontFamily="Liberation Mono" fontSize="11" fontWeight="700">
          <text x="639" y="409">Y</text>
          <text x="622" y="421">Z</text>
          <text x="614" y="452">X</text>
        </g>
        <path d="M623 450v10l2-2 2 4 1.500-1-1.500-3.500h3z" fill="#fff" stroke="#333" strokeWidth="0.6" />

        {/* view triad */}
        <path d="M391 542l-12 7" stroke="#101088" strokeWidth="3" />
        <path d="M372 553l6-9 6 8z" fill="#0e0ea8" />
        <path d="M391 542l12 7" stroke="#9c1414" strokeWidth="3" />
        <path d="M409 553l-6-9-5 8z" fill="#c01616" />
        <path d="M391 542v-14" stroke="#168a1c" strokeWidth="3" />
        <path d="M391 520l5 9h-10z" fill="#18b822" />
        <g fill="#fff" fontFamily="DejaVu Sans" fontSize="18" fontWeight="700" textAnchor="middle">
          <text x="390" y="512">Y</text>
          <text x="360" y="564">Z</text>
          <text x="420" y="564">X</text>
        </g>

        {/* compass */}
        <g stroke="#c6d8f2" strokeWidth="1.5">
          <path d="M1164 191c-16 11-29 32-29 50l29-16 30 16c0-18-14-39-30-50z" fill="#145b67" />
          <path d="M1164 235l-32 18c0 11 15 18 32 18s32-7 32-18z" fill="#145b67" />
          <path d="M1164 184v66" />
        </g>
        <circle cx="1164" cy="181" r="4" fill="#dcdcfa" />
        <rect x="1159" y="248" width="11" height="11" fill="#cc0404" />
        <g fill="#b9c53c" fontFamily="Liberation Sans" fontSize="11" textAnchor="middle">
          <text x="1164" y="172">Y</text>
          <text x="1127" y="249">Z</text>
          <text x="1202" y="249">X</text>
        </g>
      </svg>
    </div>
  );
}

function PromptBar() {
  return (
    <div className="flex h-[31px] shrink-0 items-center bg-gradient-to-b from-[#fbfbfb] to-[#ebebeb] pl-[5px]">
      <button aria-label="Back" className="flex h-[18px] w-4 items-center justify-center border border-[#c8c8c8] bg-[#c6c6c6]">
        <svg width="12" height="10" viewBox="0 0 12 10" fill="none" stroke="#8c8c8c" strokeWidth="1.5"><path d="M11 3.500H5V1L1 5l4 4V6.500h6" /></svg>
      </button>
      <button aria-label="Cancel procedure" className="ml-0.5 flex h-[18px] w-4 items-center justify-center border border-[#b5b5b5] bg-[#e4e4e4]">
        <svg width="10" height="12" viewBox="0 0 10 12" stroke="#d8182c" strokeWidth="1.5"><path d="M1 1l8 10M9 1L1 11" /></svg>
      </button>
      <p className="ml-[5px] flex-1 truncate">Fill out the Create Datum CSYS dialog</p>
      <svg width="20" height="20" viewBox="0 0 20 20" fill="none" stroke="#2c9c92" strokeWidth="1.4">
        <path d="M5 2c4-2 6 0 3 2L5 6" />
        <path d="M6 9c4-1 4 3 1 6-2 2-4 3-6 3 2-3 4-4 5-9zM18 5c-3-2-6 0-5 3s3 4 1 6-4 2-5 2" />
      </svg>
      <span className="mr-0.5 font-['DejaVu_Sans'] text-[13px] font-bold text-[#2c9c92] italic">SIMULIA</span>
    </div>
  );
}

const messages = `Warning: Cannot continue yet--complete the step or cancel the procedure.
The selected region of part "Part-1" has the following material orientations:
---------------------------------------------------------
Selected Coordinate systems:        '1 face'
Specified material orientation has been assigned to the selected regions.
The model database has been saved to "C:\\Users\\MANAS\\OneDrive\\Desktop\\For validation\\1\\cylinder 1.cae".`;

function MessageArea() {
  return (
    <section className="flex shrink-0 border-t border-[#e2e2e2] bg-[#f2f2f2] pb-px">
      <div className="flex w-8 flex-col items-center">
        <button aria-label="Message area" className="flex h-[33px] w-full items-center justify-center bg-[#fbfbfb]">
          <svg width="18" height="20" viewBox="0 0 18 20">
            <path d="M3.500 1.500h13v15h-13z" fill="#e8eadb" stroke="#777" />
            <path d="M1 18l6-7 3 3-6 5z" fill="#c9a13a" stroke="#5c4a18" />
          </svg>
        </button>
        <button aria-label="Command line" className="mt-0.5 flex h-[21px] w-5 items-center justify-center border border-[#5f5a28] bg-[#ecd85a]">
          <svg width="15" height="9" viewBox="0 0 15 9" fill="none" stroke="#222" strokeWidth="1.5"><path d="M1 1l3 3.500L1 8M6 1l3 3.500L6 8M11 1l3 3.500L11 8" /></svg>
        </button>
      </div>
      <div className="flex min-w-0 flex-1 border border-t-2 border-[#bcbcbc] bg-white">
        <pre className="min-w-0 flex-1 overflow-hidden pt-0.5 pl-1 font-['Liberation_Mono',monospace] text-[11px] leading-[11px] text-[#222]">
          {messages}
        </pre>
        <div className="flex w-[14px] flex-col items-center bg-[#f2f2f2] py-1">
          <Chevron className="rotate-180 text-black" />
          <div className="mt-auto mb-1 h-7 w-full bg-[#cdcdcd]" />
          <Chevron className="text-black" />
        </div>
      </div>
      <div className="flex w-[13px] items-end justify-end">
        <svg width="10" height="10" fill="#aaa"><path d="M8 0h2v2H8zM4 4h2v2H4zM8 4h2v2H8zM0 8h2v2H0zM4 8h2v2H4zM8 8h2v2H8z" /></svg>
      </div>
    </section>
  );
}

const apps: { name: string; open: boolean; active?: boolean; art: ReactNode }[] = [
  {
    name: 'Task View',
    open: false,
    art: <path d="M2 1v3h9V1M2 17v-3h9v3M2 7h9v4H2zM15.500 1v16M14 7h3v3h-3z" stroke="#fff" strokeWidth="1.2" />,
  },
  {
    name: 'File Explorer',
    open: true,
    art: (
      <>
        <path d="M0 1h7l1 2h10v14H0z" fill="#f6d66b" />
        <path d="M1 6h16v4H1z" fill="#fbe9a6" />
        <path d="M3 17v-6h12v6h-4v-3H7v3z" fill="#3e9fd6" />
      </>
    ),
  },
  {
    name: 'Snipping Tool',
    open: true,
    art: (
      <>
        <ellipse cx="8" cy="6" rx="7" ry="5.5" fill="#f0e6ea" transform="rotate(25 8 6)" />
        <path d="M4 4l8 6" stroke="#c43a4c" />
        <path d="M11 9l2 8M13 9l-5 5" stroke="#3f8ad0" strokeWidth="1.6" />
        <circle cx="15" cy="12" r="2" stroke="#3f8ad0" strokeWidth="1.4" />
      </>
    ),
  },
  {
    name: 'Chrome',
    open: true,
    art: (
      <>
        <circle cx="9" cy="9" r="9" fill="#f2c230" />
        <path d="M9 9L1.200 4.500a9 9 0 0 1 15.600 0z" fill="#dc4437" />
        <path d="M9 9L1.200 4.500A9 9 0 0 0 8 18l4-7z" fill="#1fa05a" />
        <circle cx="9" cy="9" r="4.2" fill="#fff" />
        <circle cx="9" cy="9" r="3.2" fill="#4a88ee" />
      </>
    ),
  },
  {
    name: 'Workbench',
    open: false,
    art: (
      <>
        <rect width="18" height="18" fill="#a9a9a9" />
        <text x="9" y="13" textAnchor="middle" fontSize="10" fontWeight="700" fill="#fff">WB</text>
      </>
    ),
  },
  {
    name: 'MATLAB',
    open: false,
    art: (
      <>
        <path d="M0 11l6-3 3 4-4 3z" fill="#3f8fb5" />
        <path d="M6 8c2-1 3-6 5-7l-2 12-3-1z" fill="#8f3a1c" />
        <path d="M11 1c2 2 3 9 7 14-3-2-5-1-8 2l-2-5z" fill="#e2762a" />
      </>
    ),
  },
  {
    name: 'Word',
    open: true,
    art: (
      <>
        <rect x="8" y="2" width="10" height="14" fill="#fff" />
        <path d="M10 5h7M10 8h7M10 11h7M10 14h7" stroke="#4a76b8" />
        <path d="M0 2l11-2v18L0 16z" fill="#2c5cab" />
        <text x="5.5" y="12.5" textAnchor="middle" fontSize="9" fontWeight="700" fill="#fff">W</text>
      </>
    ),
  },
  {
    name: 'Command Prompt',
    open: true,
    art: (
      <>
        <rect x="0.5" y="2.5" width="17" height="13" fill="#050505" stroke="#c9c9c9" />
        <path d="M3 6h3M8 6h2" stroke="#ddd" />
      </>
    ),
  },
  {
    name: 'Abaqus',
    open: true,
    active: true,
    art: abaqusLogo,
  },
  {
    name: 'Camera',
    open: true,
    art: (
      <>
        <path d="M4 1h14v10c0 4-2 6-6 6H0V5c0-2 2-4 4-4z" fill="#ef4356" />
        <path d="M0 9v8h12z" fill="#39b87a" />
        <path d="M12 1h6v8z" fill="#3cc2d8" />
        <circle cx="9" cy="9" r="6" fill="#fff" />
        <circle cx="9" cy="9" r="3.8" fill="#e4304a" />
        <circle cx="9" cy="9" r="2" fill="#fff" />
      </>
    ),
  },
];

function Taskbar() {
  return (
    <footer className="flex h-[34px] shrink-0 items-stretch bg-[#0c1629] text-white">
      <button aria-label="Start" className="flex w-10 items-center justify-center">
        <svg width="15" height="16" viewBox="0 0 15 16" fill="#fff"><path d="M0 2.300l6.500-.9v6.200H0zM7.300 1.200L15 0v7.600H7.300zM0 8.400h6.500v6.200L0 13.700zM7.300 8.400H15V16l-7.700-1.200z" /></svg>
      </button>
      <div className="flex w-[286px] items-center bg-[#f1f1f1] pr-3 pl-2 text-[#444]">
        <svg width="18" height="18" viewBox="0 0 18 18" fill="none" stroke="#111" strokeWidth="2.2" className="shrink-0"><circle cx="9" cy="9" r="7" /></svg>
        <input
          aria-label="Search"
          placeholder="Type here to search"
          className="ml-[7px] min-w-0 flex-1 bg-transparent text-xs outline-none placeholder:text-[#444]"
        />
        <svg width="9" height="15" viewBox="0 0 9 15" fill="none" stroke="#333"><path d="M2.500 1h4v8h-4zM.5 6.500v4h8v-4M4.500 10.500V14M2.500 14.500h4" /></svg>
      </div>
      <div className="flex">
        {apps.map((app) => (
          <button
            key={app.name}
            aria-label={app.name}
            className={`relative flex items-center justify-center ${app.name === 'Task View' ? 'w-[42px]' : 'w-[41px]'} ${app.active ? 'bg-[#474c61]' : ''}`}
          >
            <Svg size={app.name === 'Task View' ? 15 : 19}>{app.art}</Svg>
            {app.open && (
              <span className={`absolute bottom-0 h-[3px] bg-[#76aee6] ${app.active ? 'inset-x-0' : 'inset-x-[3px]'}`} />
            )}
          </button>
        ))}
      </div>
      <div className="ml-auto flex items-center gap-[7px]">
        <svg width="14" height="15" viewBox="0 0 14 15" fill="none" stroke="#fff" className="mr-2.5">
          <circle cx="4.5" cy="6.5" r="2" /><path d="M1 14c0-6 7-6 7 0" /><circle cx="9.5" cy="3" r="2" /><path d="M8 7c2-2 5-1 5 3" />
        </svg>
        <svg width="11" height="7" viewBox="0 0 11 7" fill="none" stroke="#fff"><path d="M.5 6.500l5-5 5 5" /></svg>
        <svg width="14" height="12" viewBox="0 0 14 12"><path d="M3 9c-4 0-3-5 0-4 0-5 6-6 7-2 3 0 4 4 2 6z" fill="#d2d5da" /><rect x="7" y="4" width="6" height="8" rx="1" fill="#8d949f" /></svg>
        <svg width="14" height="10" viewBox="0 0 14 10" fill="none" stroke="#fff"><path d="M5 2.500h8.500v6H4.500zM1 0v3M3.500 0v3M.5 3.500H4v2H2.500V9" /></svg>
        <svg width="12" height="12" viewBox="0 0 12 12" fill="none" stroke="#e8e8e8"><path d="M1 11C1 5 5 1 11 1M4 11c0-4 3-7 7-7M7 11c0-2.500 1.500-4 4-4" /><circle cx="10" cy="10.5" r="1" fill="#fff" /></svg>
        <svg width="14" height="12" viewBox="0 0 14 12" fill="none" stroke="#fff"><path d="M.5 4v4h2l3 3V1l-3 3zM7.500 4c1 1 1 3 0 4M9.500 2.500c2 2 2 5 0 7M11.500 1c3 3 3 7 0 10" /></svg>
        <span>ENG</span>
        <div className="ml-1 text-center leading-[15px]">
          <div>23:35</div>
          <div>17-12-2021</div>
        </div>
        <button aria-label="Notifications" className="relative mr-4.5 ml-2">
          <svg width="16" height="16" viewBox="0 0 16 16"><path d="M1 1h14v11H9l-3 3v-3H1z" fill="#fff" /><path d="M3 4h10M3 6.500h10M3 9h6" stroke="#0c1629" /></svg>
          <span className="absolute -right-1 -bottom-1 flex size-3 items-center justify-center rounded-full bg-[#4a505c] text-[9px]">4</span>
        </button>
      </div>
    </footer>
  );
}

function CsysDialog() {
  const [name, setName] = useState('Datum csys-2');
  const [kind, setKind] = useState('Rectangular');
  const nameRef = useRef<HTMLInputElement>(null);

  useEffect(() => {
    nameRef.current?.focus();
    nameRef.current?.select();
  }, []);

  return (
    <div
      role="dialog"
      aria-labelledby="dialog-title"
      className="absolute top-[127px] left-2 w-[142px] border border-[#7fb0c4] bg-[#f6f6f6] px-1 pb-[3px] shadow-[2px_3px_8px_rgba(0,0,0,0.4)]"
    >
      <div className="-mx-1 flex h-[25px] items-center bg-white pr-2.5 pl-[7px]">
        <Svg size={12}>{abaqusLogo}</Svg>
        <h2 id="dialog-title" className="ml-1 flex-1">Create Datum CSYS</h2>
        <button aria-label="Close dialog">
          <svg width="9" height="9" stroke="#333" fill="none"><path d="M.5.5l8 8M8.500.5l-8 8" /></svg>
        </button>
      </div>
      <div className="mt-1 flex items-center">
        <label htmlFor="csys-name" className="w-[33px]">Name:</label>
        <input
          id="csys-name"
          ref={nameRef}
          value={name}
          onChange={(e) => setName(e.target.value)}
          className="h-[18px] min-w-0 flex-1 border border-[#a8bccb] bg-white px-[3px] outline-none selection:bg-[#0078d7] selection:text-white"
        />
      </div>
      <fieldset className="mt-[5px] border border-[#dcdcdc] pb-[3px] pl-[5px]">
        <legend className="ml-0.5 px-0.5 leading-4">Coordinate System Type</legend>
        <div className="pt-px">
          {['Rectangular', 'Cylindrical', 'Spherical'].map((option) => (
            <label key={option} className="flex h-[19px] items-center">
              <input
                type="radio"
                name="csys-type"
                checked={kind === option}
                onChange={() => setKind(option)}
                className="mr-[3px] size-[11px] appearance-none rounded-full border border-[#444] bg-white bg-clip-content p-0.5 checked:bg-[#222]"
              />
              {option}
            </label>
          ))}
        </div>
      </fieldset>
      <div className="mt-2 flex gap-[5px]">
        <button className="h-[18px] flex-1 border-2 border-[#2a7cc4] bg-[#e2e2e2] leading-3">Continue...</button>
        <button className="h-[18px] flex-1 border border-[#b5b5b5] bg-[#e2e2e2] leading-3">Cancel</button>
      </div>
    </div>
  );
}

export default function App() {
  return (
    <div className="relative flex h-screen min-h-[720px] flex-col overflow-hidden bg-[#fbfbfc] font-[Roboto,sans-serif] text-[10px] leading-4 text-[#1c1c1c]">
      <div className="flex min-h-0 flex-1 flex-col border-r-2 border-l border-black">
        <TitleBar />
        <MenuBar />
        <Toolbars />
        <div className="flex min-h-0 flex-1">
          <ModelPanel />
          <main className="flex min-w-0 flex-1 flex-col">
            <div className="flex h-[27px] shrink-0 items-center bg-gradient-to-r from-[#fbfbfc] to-[#f2f2f2] pl-[5px]">
              <label htmlFor="module" className="mr-[5px]">Module:</label>
              <Combo id="module" value="Property" spin="dark" className="mr-2.5 h-5 w-[89px]" />
              <label htmlFor="model" className="mr-[5px]">Model:</label>
              <Combo id="model" value="Model-1" spin="light" className="mr-2.5 h-5 w-[74px]" />
              <label htmlFor="part" className="mr-[5px]">Part:</label>
              <Combo id="part" value="Part-1" spin="light" className="h-5 w-[73px]" />
            </div>
            <div className="flex min-h-0 flex-1">
              <Toolbox />
              <Viewport />
            </div>
            <PromptBar />
          </main>
        </div>
        <MessageArea />
      </div>
      <Taskbar />
      <CsysDialog />
    </div>
  );
}
